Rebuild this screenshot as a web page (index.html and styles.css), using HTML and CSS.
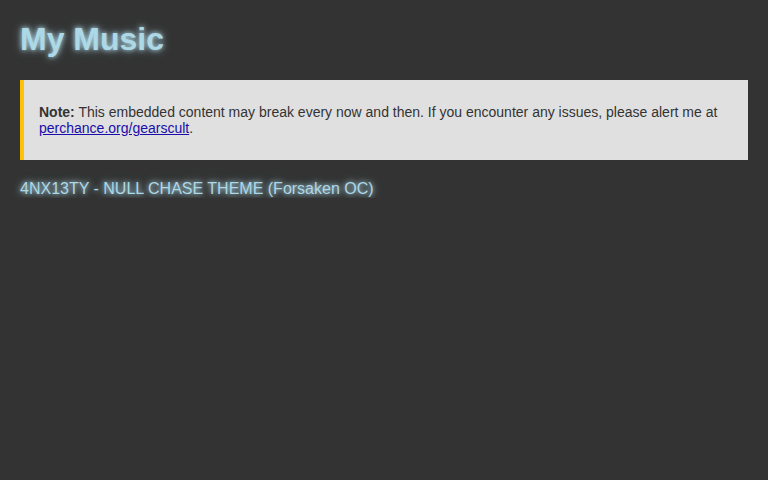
FILE: index.html
```html
<!DOCTYPE html>
<html>
<head>
<meta charset="utf-8">
<link rel="stylesheet" href="styles.css">
</head>
<body>
<h1 class="title">My Music</h1>
<div class="note">
  <p><strong>Note:</strong> This embedded content may break every now and then. If you encounter any issues, please alert me at <a href="#">perchance.org/gearscult</a>.</p>
</div>
<div class="song">4NX13TY - NULL CHASE THEME (Forsaken OC)</div>
</body>
</html>
```
FILE: styles.css
```css
html, body {
  margin: 0;
  background: #333333;
}
body {
  padding: 0 20px;
  font-family: "Liberation Sans", Arial, sans-serif;
}
.title {
  font-size: 32px;
  margin: 21.44px 0;
  color: #add8e6;
  text-shadow: 0 0 5px #add8e6, 0 0 10px rgba(173, 216, 230, 0.6);
}
.note {
  background: #e0e0e0;
  border-left: 4px solid #ffc107;
  padding: 24px 15px;
  color: #333333;
  font-size: 14px;
}
.note p {
  margin: 0;
}
.note a {
  color: #1a0dab;
}
.song {
  margin-top: 20px;
  font-size: 16px;
  color: #add8e6;
  text-shadow: 0 0 5px #add8e6, 0 0 10px rgba(173, 216, 230, 0.6);
}
```
